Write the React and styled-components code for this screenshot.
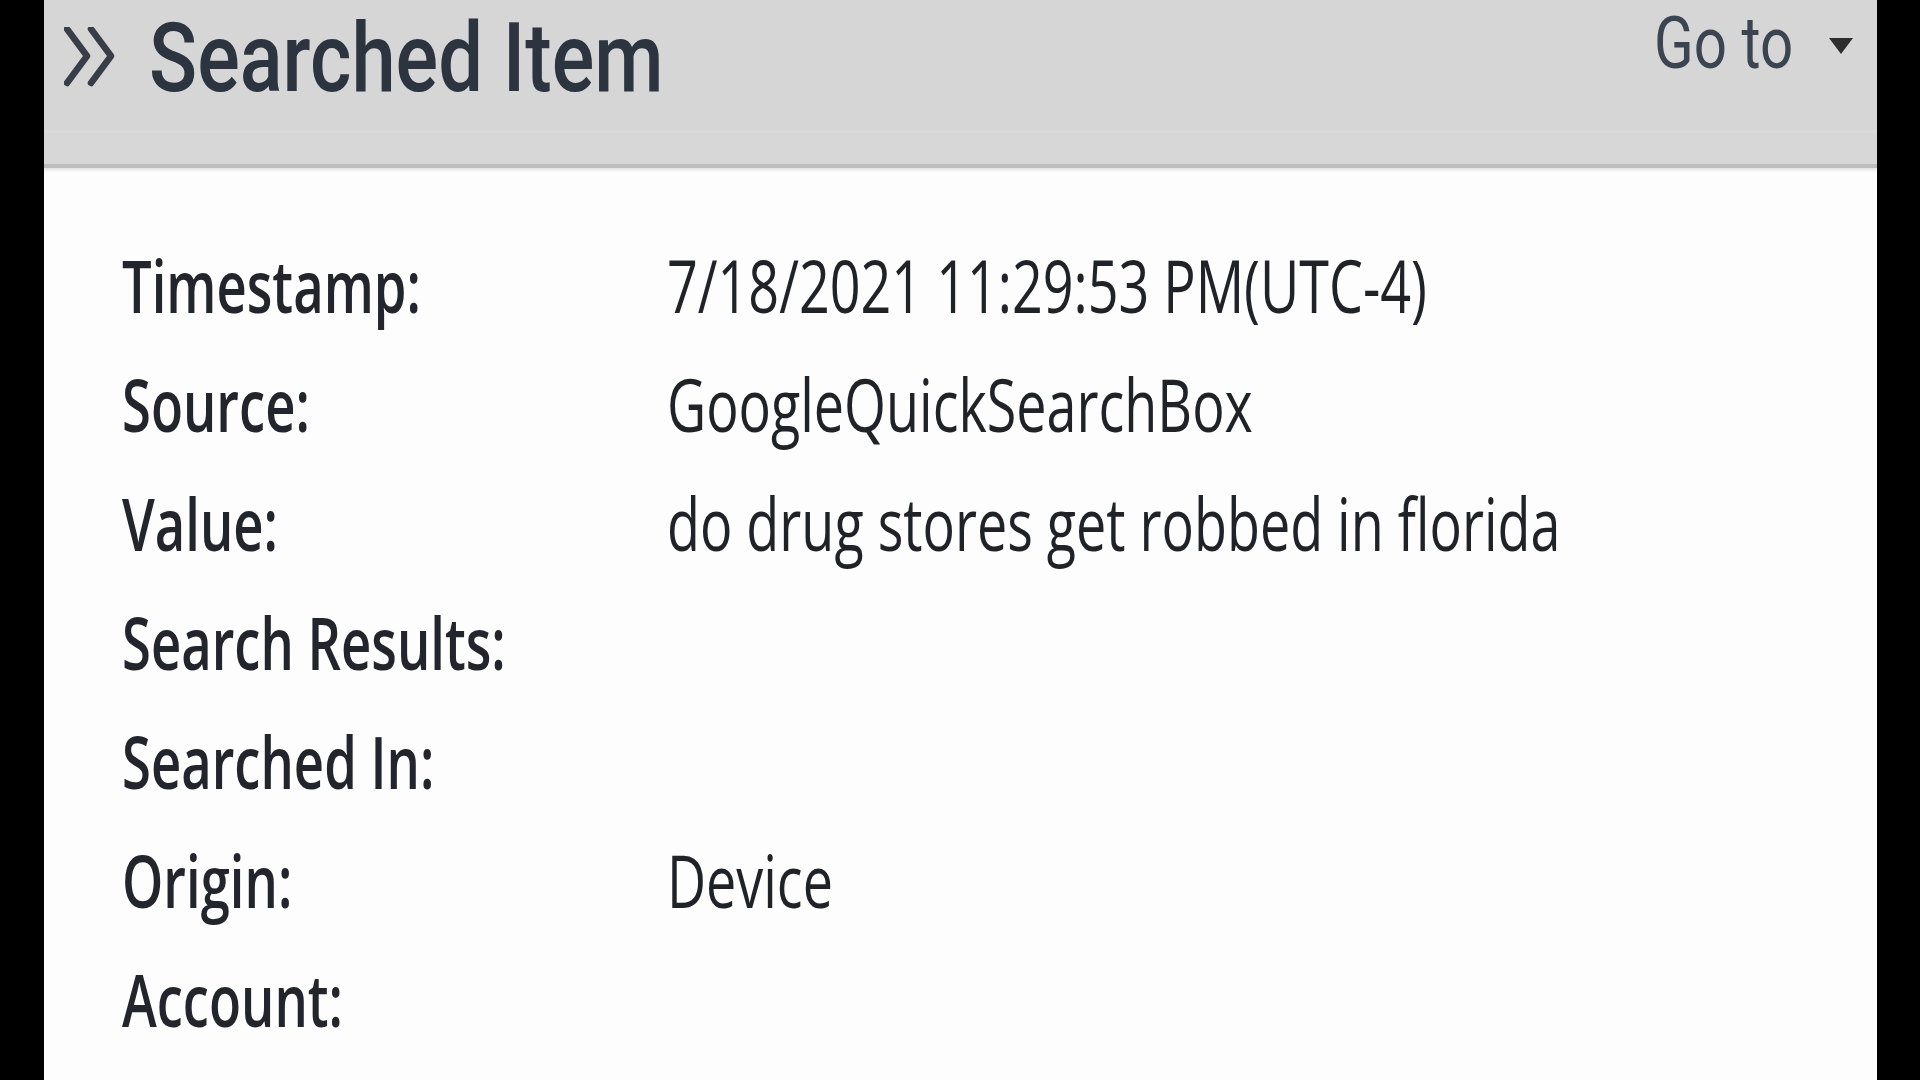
import React from "react";
import styled, { createGlobalStyle } from "styled-components";

const Global = createGlobalStyle`
  html, body { margin: 0; padding: 0; background: #000; }
  body { font-family: "Open Sans", "Noto Sans", sans-serif; }
  #root { width: 1920px; height: 1080px; }
`;

const Screen = styled.div`
  width: 1920px;
  height: 1080px;
  background: #000;
  display: flex;
  justify-content: center;
  padding: 0 44px 0 45px;
  box-sizing: border-box;
`;

const Panel = styled.div`
  flex: 1;
  background: #fdfdfd;
  display: flex;
  flex-direction: column;
`;

const Header = styled.header`
  height: 164px;
  flex: none;
  background: linear-gradient(
    to bottom,
    #d6d6d6 0,
    #d6d6d6 130px,
    #dadada 130px,
    #dadada 133px,
    #d7d7d7 133px,
    #d7d7d7 100%
  );
  border-bottom: 4px solid #bdbdbd;
  box-shadow: 0 2px 3px rgba(0, 0, 0, 0.12);
  display: flex;
  align-items: flex-start;
  justify-content: space-between;
  padding: 0 24px 0 20px;
  font-family: Roboto, "Open Sans", sans-serif;
`;

const TitleGroup = styled.div`
  display: flex;
  align-items: flex-start;
`;

const ChevronIcon = styled.svg`
  width: 54px;
  height: 60px;
  margin-top: 27px;
  flex: none;
`;

const Stretch = styled.span`
  display: inline-block;
  white-space: nowrap;
  transform: scaleX(${(p) => p.$sx});
  transform-origin: left center;
`;

const Title = styled.h1`
  margin: 2px 0 0 31px;
  font-size: 96px;
  line-height: normal;
  font-weight: 500;
  color: #2c3440;
`;

const GoTo = styled.button`
  display: flex;
  align-items: flex-start;
  background: none;
  border: none;
  padding: 0;
  margin-top: 1px;
  font-family: inherit;
  cursor: pointer;
`;

const GoToText = styled.span`
  display: block;
  width: 178px;
  font-size: 72px;
  line-height: normal;
  font-weight: 400;
  color: #3b4552;
`;

const Caret = styled.span`
  width: 0;
  height: 0;
  margin-top: 37px;
  border-left: 12px solid transparent;
  border-right: 12px solid transparent;
  border-top: 16px solid #2e2e2e;
`;

const Body = styled.div`
  padding: 57px 0 0 78px;
  display: flex;
  flex-direction: column;
`;

const Row = styled.div`
  display: grid;
  grid-template-columns: 545px 1fr;
  height: 119px;
  align-items: start;
`;

const Label = styled.div`
  font-size: 73px;
  line-height: 119px;
  font-weight: 600;
  color: #22262c;
`;

const Value = styled.div`
  font-size: 73px;
  line-height: 119px;
  font-weight: 400;
  color: #1f2328;
`;

const rows = [
  ["Timestamp:", "7/18/2021 11:29:53 PM(UTC-4)"],
  ["Source:", "GoogleQuickSearchBox"],
  ["Value:", "do drug stores get robbed in florida"],
  ["Search Results:", ""],
  ["Searched In:", ""],
  ["Origin:", "Device"],
  ["Account:", ""],
];

export default function App() {
  return (
    <>
      <Global />
      <Screen>
        <Panel>
          <Header>
            <TitleGroup>
              <ChevronIcon viewBox="0 0 54 60" aria-hidden="true">
                <path
                  d="M3 2 L23 29 L3 56 M27 2 L47 29 L27 56"
                  fill="none"
                  stroke="#383e48"
                  strokeWidth="6.5"
                  strokeLinecap="round"
                  strokeLinejoin="round"
                />
              </ChevronIcon>
              <Title>
                <Stretch $sx={0.828}>Searched Item</Stretch>
              </Title>
            </TitleGroup>
            <GoTo>
              <GoToText>
                <Stretch $sx={0.81}>Go to</Stretch>
              </GoToText>
              <Caret />
            </GoTo>
          </Header>
          <Body>
            {rows.map(([label, value]) => (
              <Row key={label}>
                <Label>
                  <Stretch $sx={0.72}>{label}</Stretch>
                </Label>
                <Value>
                  <Stretch $sx={0.738}>{value}</Stretch>
                </Value>
              </Row>
            ))}
          </Body>
        </Panel>
      </Screen>
    </>
  );
}
